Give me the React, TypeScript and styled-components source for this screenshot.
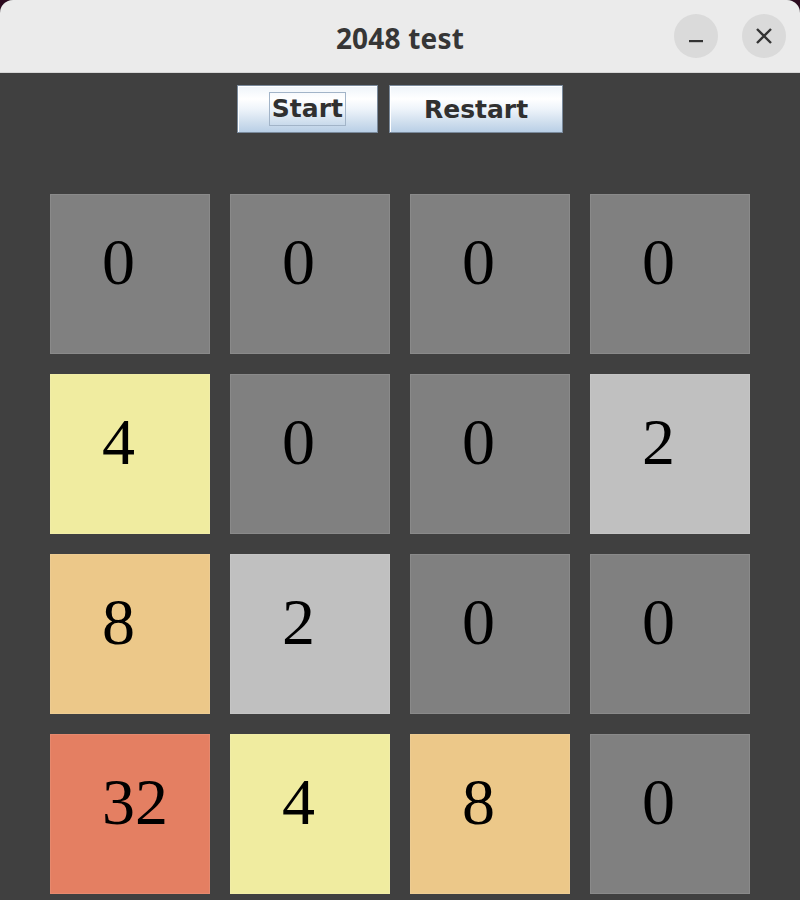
import React from "react";
import styled, { createGlobalStyle } from "styled-components";

const GlobalStyle = createGlobalStyle`
  html, body {
    margin: 0;
    padding: 0;
    background: #2c0a1e;
  }
  * { box-sizing: border-box; }
`;

const Window = styled.div`
  width: 800px;
  height: 900px;
  overflow: hidden;
  display: flex;
  flex-direction: column;
  background: #404040;
  border-radius: 13px 13px 0 0;
`;

const TitleBar = styled.header`
  height: 73px;
  flex: none;
  display: grid;
  grid-template-columns: 1fr auto 1fr;
  align-items: center;
  background: #ebebeb;
  border-bottom: 1px solid #d6d6d6;
  padding: 0 14px 0 14px;
`;

const Title = styled.h1`
  grid-column: 2;
  margin: 4px 0 0 0;
  font-family: "Noto Sans", "DejaVu Sans", sans-serif;
  font-weight: 700;
  font-size: 28px;
  color: #363636;
  letter-spacing: 0.2px;
`;

const Controls = styled.div`
  grid-column: 3;
  justify-self: end;
  display: flex;
  gap: 24px;
  margin-top: -1px;
`;

const ControlButton = styled.button`
  width: 44px;
  height: 44px;
  border-radius: 50%;
  border: none;
  padding: 0;
  background: #dadada;
  color: #333;
  display: flex;
  align-items: center;
  justify-content: center;
`;

const Content = styled.main`
  flex: 1;
  display: flex;
  flex-direction: column;
  align-items: center;
  padding-top: 12px;
`;

const ButtonRow = styled.div`
  display: flex;
  gap: 11px;
`;

const MetalButton = styled.button<{ $pad: number }>`
  height: 48px;
  padding: 0 ${(p) => p.$pad}px;
  border: 1px solid #7a8a9c;
  box-shadow: inset 1px 1px 0 #ffffff;
  background: linear-gradient(
    to bottom,
    #eef4fa 0%,
    #ffffff 28%,
    #eef4fa 50%,
    #d0dfee 78%,
    #b9cfe6 100%
  );
  font-family: "DejaVu Sans", sans-serif;
  font-weight: 700;
  font-size: 25px;
  color: #303030;
  display: flex;
  align-items: center;
  justify-content: center;
`;

const FocusRing = styled.span`
  display: inline-block;
  padding: 1px 2px 2px 2px;
  border: 1px solid #a2b4c8;
  line-height: 29px;
`;

const Board = styled.div`
  margin-top: 61px;
  display: grid;
  grid-template-columns: repeat(4, 160px);
  grid-auto-rows: 160px;
  gap: 20px;
`;

const Tile = styled.div<{ $bg: string }>`
  background: ${(p) => p.$bg};
  border: 1px solid rgba(255, 255, 255, 0.08);
  padding: 34px 0 0 51px;
  font-family: "Liberation Serif", "Times New Roman", serif;
  font-size: 66px;
  line-height: 66px;
  color: #000;
`;

const tileColors: Record<number, string> = {
  0: "#808080",
  2: "#c0c0c0",
  4: "#f0eca0",
  8: "#ecc889",
  16: "#e8a070",
  32: "#e47f62",
};

const board = [
  [0, 0, 0, 0],
  [4, 0, 0, 2],
  [8, 2, 0, 0],
  [32, 4, 8, 0],
];

export default function App() {
  return (
    <>
      <GlobalStyle />
      <Window>
        <TitleBar>
          <Title>2048 test</Title>
          <Controls>
            <ControlButton aria-label="Minimize">
              <svg width="16" height="16" viewBox="0 0 16 16">
                <rect x="1" y="12" width="14" height="2.2" fill="#333" />
              </svg>
            </ControlButton>
            <ControlButton aria-label="Close">
              <svg width="18" height="18" viewBox="0 0 18 18">
                <path
                  d="M2 2 L16 16 M16 2 L2 16"
                  stroke="#333"
                  strokeWidth="2.4"
                  fill="none"
                />
              </svg>
            </ControlButton>
          </Controls>
        </TitleBar>
        <Content>
          <ButtonRow>
            <MetalButton $pad={31}>
              <FocusRing>Start</FocusRing>
            </MetalButton>
            <MetalButton $pad={34}>Restart</MetalButton>
          </ButtonRow>
          <Board>
            {board.flat().map((v, i) => (
              <Tile key={i} $bg={tileColors[v]}>
                {v}
              </Tile>
            ))}
          </Board>
        </Content>
      </Window>
    </>
  );
}
